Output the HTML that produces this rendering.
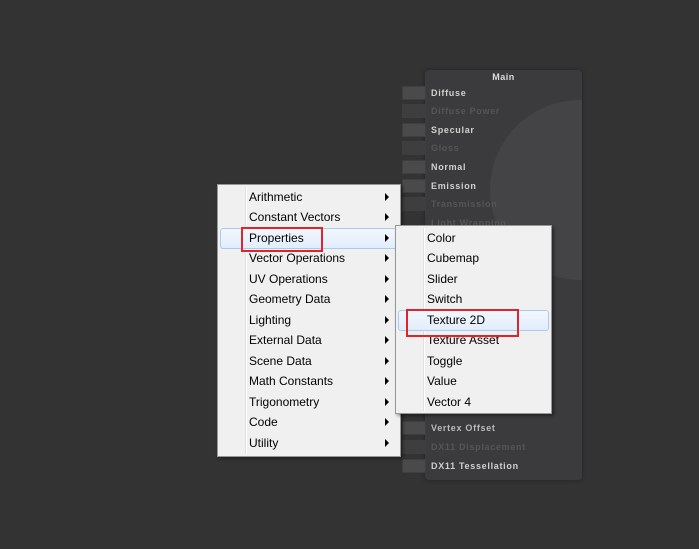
<!DOCTYPE html>
<html><head><style>
body{margin:0;width:699px;height:549px;background:#333;position:relative;overflow:hidden;font-family:"Liberation Sans",sans-serif}
.node{position:absolute;left:425px;top:70px;width:157px;height:410px;background:#3b3b3d;border-radius:4px;box-shadow:0 0 4px #222}
.hdr{position:absolute;left:425px;top:70px;width:157px;height:14px;text-align:center;color:#ddd;font-size:9px;font-weight:bold;line-height:14px;letter-spacing:.5px}
.sphere{position:absolute;left:490px;top:100px;width:180px;height:180px;border-radius:50%;background:#444447}
.slot{position:absolute;left:402px;width:22px;height:12px;background:#4a4a4a;border:1px solid #3e3e3e}
.lbl{position:absolute;left:431px;font-size:9px;font-weight:bold;letter-spacing:.7px;color:#d0d0d0}
.dim{color:#555}
.menu{position:absolute;background:#f0f0f0;border:1px solid #979797;box-shadow:2px 2px 3px rgba(0,0,0,.4)}
.gut{position:absolute;top:2px;bottom:2px;width:1px;background:#e0e0e0;border-right:1px solid #fff}
.it{position:absolute;font-size:12px;color:#000;line-height:14px}
.ar{position:absolute;width:0;height:0;border-left:4px solid #000;border-top:4px solid transparent;border-bottom:4px solid transparent}
.hl{position:absolute;background:linear-gradient(#f2f7fd,#e2edfb);border:1px solid #a9cbf0;border-radius:3px}
.red{position:absolute;border:2px solid #e0242b}
</style></head><body>
<div class="node"></div>
<div class="sphere" style="clip-path:inset(0 88px 0 0)"></div>
<div class="hdr">Main</div>
<div class="slot" style="top:86px"></div><div class="lbl" style="top:88px">Diffuse</div>
<div class="slot" style="top:104px;background:#3e3e3e"></div><div class="lbl dim" style="top:106px">Diffuse Power</div>
<div class="slot" style="top:123px"></div><div class="lbl" style="top:125px">Specular</div>
<div class="slot" style="top:141px;background:#3e3e3e"></div><div class="lbl dim" style="top:143px">Gloss</div>
<div class="slot" style="top:160px"></div><div class="lbl" style="top:162px">Normal</div>
<div class="slot" style="top:179px"></div><div class="lbl" style="top:181px">Emission</div>
<div class="slot" style="top:197px;background:#3e3e3e"></div><div class="lbl dim" style="top:199px">Transmission</div>
<div class="lbl dim" style="top:218px">Light Wrapping</div>
<div class="slot" style="top:421px"></div><div class="lbl" style="top:423px;color:#bbb">Vertex Offset</div>
<div class="slot" style="top:440px;background:#3e3e3e"></div><div class="lbl dim" style="top:442px">DX11 Displacement</div>
<div class="slot" style="top:459px"></div><div class="lbl" style="top:461px">DX11 Tessellation</div>

<div class="menu" style="left:217px;top:184px;width:182px;height:271px">
<div class="gut" style="left:27px"></div>
<div class="hl" style="left:2px;top:43px;width:176px;height:19px"></div>
</div>
<div class="it" style="left:249px;top:190px">Arithmetic</div>
<div class="it" style="left:249px;top:210px">Constant Vectors</div>
<div class="it" style="left:249px;top:231px">Properties</div>
<div class="it" style="left:249px;top:251px">Vector Operations</div>
<div class="it" style="left:249px;top:272px">UV Operations</div>
<div class="it" style="left:249px;top:292px">Geometry Data</div>
<div class="it" style="left:249px;top:313px">Lighting</div>
<div class="it" style="left:249px;top:333px">External Data</div>
<div class="it" style="left:249px;top:354px">Scene Data</div>
<div class="it" style="left:249px;top:374px">Math Constants</div>
<div class="it" style="left:249px;top:395px">Trigonometry</div>
<div class="it" style="left:249px;top:415px">Code</div>
<div class="it" style="left:249px;top:436px">Utility</div>
<div class="ar" style="left:385px;top:193px"></div>
<div class="ar" style="left:385px;top:213px"></div>
<div class="ar" style="left:385px;top:234px"></div>
<div class="ar" style="left:385px;top:254px"></div>
<div class="ar" style="left:385px;top:275px"></div>
<div class="ar" style="left:385px;top:295px"></div>
<div class="ar" style="left:385px;top:316px"></div>
<div class="ar" style="left:385px;top:336px"></div>
<div class="ar" style="left:385px;top:357px"></div>
<div class="ar" style="left:385px;top:377px"></div>
<div class="ar" style="left:385px;top:398px"></div>
<div class="ar" style="left:385px;top:418px"></div>
<div class="ar" style="left:385px;top:439px"></div>

<div class="menu" style="left:395px;top:225px;width:155px;height:187px">
<div class="gut" style="left:27px"></div>
<div class="hl" style="left:2px;top:84px;width:149px;height:19px"></div>
</div>
<div class="it" style="left:427px;top:231px">Color</div>
<div class="it" style="left:427px;top:251px">Cubemap</div>
<div class="it" style="left:427px;top:272px">Slider</div>
<div class="it" style="left:427px;top:292px">Switch</div>
<div class="it" style="left:427px;top:313px">Texture 2D</div>
<div class="it" style="left:427px;top:333px">Texture Asset</div>
<div class="it" style="left:427px;top:354px">Toggle</div>
<div class="it" style="left:427px;top:374px">Value</div>
<div class="it" style="left:427px;top:395px">Vector 4</div>

<div class="red" style="left:241px;top:227px;width:78px;height:21px"></div>
<div class="red" style="left:406px;top:309px;width:109px;height:24px"></div>
</body></html>
